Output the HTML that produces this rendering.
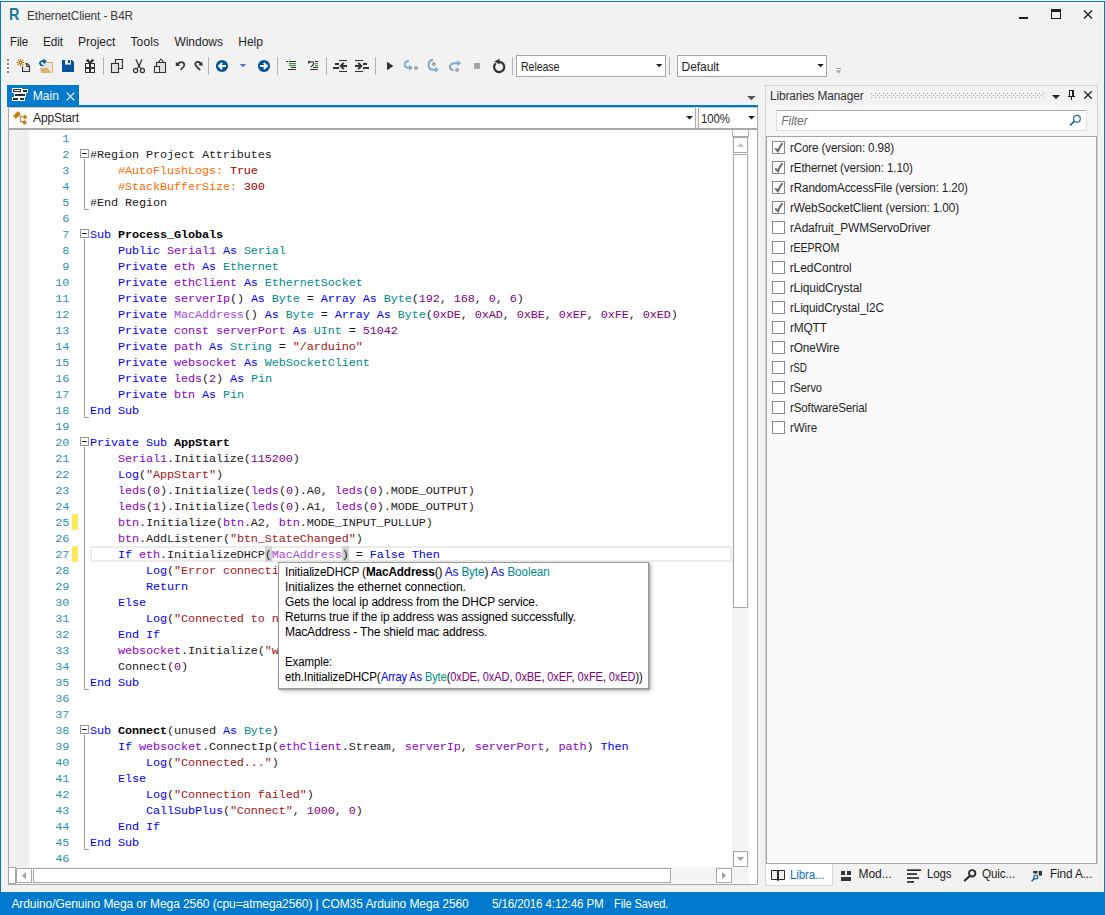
<!DOCTYPE html>
<html lang="en"><head><meta charset="utf-8"><title>EthernetClient - B4R</title>
<style>
html,body{margin:0;padding:0;background:#f2f2f2;}
body{width:1105px;height:915px;overflow:hidden;font-family:"Liberation Sans",sans-serif;font-size:12px;color:#1e1e1e;}
#win{position:relative;width:1105px;height:915px;overflow:hidden;background:#f2f2f2;}
.ab{position:absolute;box-sizing:border-box;}
.tx{position:absolute;white-space:pre;line-height:16px;height:16px;}
.mono{font-family:"Liberation Mono",monospace;}
.cl{position:absolute;left:90px;height:16px;line-height:16px;white-space:pre;font-family:"Liberation Mono",monospace;font-size:11.84px;letter-spacing:-0.1052px;margin-top:1px;color:#1a1a1a;}
.ln{position:absolute;left:30px;width:39.3px;text-align:right;height:16px;line-height:16px;font-family:"Liberation Mono",monospace;font-size:11.84px;letter-spacing:-0.1052px;margin-top:1px;color:#2b91af;}
.k{color:#0000ff;}
.t{color:#008b8b;}
.g{color:#8b00c8;}
.gh{color:#a446dc;}
.n{color:#800080;}
.s{color:#a31515;}
.b{font-weight:bold;color:#000;}
.a{color:#ff6a00;}
.r{color:#a00000;}
.w{color:#fff;}
.it{font-style:italic;}
.lib{color:#1e1e1e;}


</style></head>
<body>
<div id="win">
<div class="ab " style="left:0px;top:0px;width:1105px;height:1px;background:#ffffff"></div>
<div class="ab " style="left:0px;top:1px;width:1105px;height:1px;background:#007acc"></div>
<div class="ab " style="left:0px;top:1px;width:1px;height:914px;background:#007acc"></div>
<div class="ab " style="left:1104px;top:1px;width:1px;height:914px;background:#007acc"></div>
<div class="ab " style="left:1px;top:2px;width:1103px;height:1px;background:#fbf9f6"></div>
<div class="ab " style="left:1px;top:2px;width:1px;height:890px;background:#fbf9f6"></div>
<div class="ab " style="left:1103px;top:2px;width:1px;height:890px;background:#fbf9f6"></div>
<span id="t1" class="tx " style="left:9px;top:7.38px;font-size:17px;font-weight:bold;color:#1e7a96;letter-spacing:-0.12px;transform:scaleX(0.8470);transform-origin:0 0">R</span>
<span id="t2" class="tx " style="left:27px;top:7.63px;font-size:12px;color:#3c3c3c;letter-spacing:-0.12px;transform:scaleX(0.9846);transform-origin:0 0">EthernetClient - B4R</span>
<div class="ab " style="left:1019px;top:17px;width:9px;height:2px;background:#1e1e1e"></div>
<div class="ab " style="left:1051px;top:9px;width:10px;height:10px;border:1px solid #1e1e1e;border-top:3px solid #1e1e1e"></div>
<svg class="ab" style="left:1083px;top:10px" width="10" height="9" viewBox="0 0 10 9"><path d="M1 0.5 L9 8.5 M9 0.5 L1 8.5" stroke="#1e1e1e" stroke-width="1.3" fill="none"/></svg>
<span id="t3" class="tx " style="left:10px;top:34.23px;font-size:12px;letter-spacing:-0.12px;transform:scaleX(0.9542);transform-origin:0 0">File</span>
<span id="t4" class="tx " style="left:43px;top:34.23px;font-size:12px;letter-spacing:-0.12px;transform:scaleX(0.9798);transform-origin:0 0">Edit</span>
<span id="t5" class="tx " style="left:78px;top:34.23px;font-size:12px;letter-spacing:-0.008px">Project</span>
<span id="t6" class="tx " style="left:130.5px;top:34.23px;font-size:12px;letter-spacing:0.117px">Tools</span>
<span id="t7" class="tx " style="left:174.4px;top:34.23px;font-size:12px;letter-spacing:-0.012px">Windows</span>
<span id="t8" class="tx " style="left:238.2px;top:34.23px;font-size:12px;letter-spacing:0.028px">Help</span>
<div class="ab " style="left:7px;top:59px;width:2px;height:2px;background:#8a8a8a"></div>
<div class="ab " style="left:7px;top:63px;width:2px;height:2px;background:#8a8a8a"></div>
<div class="ab " style="left:7px;top:67px;width:2px;height:2px;background:#8a8a8a"></div>
<div class="ab " style="left:7px;top:71px;width:2px;height:2px;background:#8a8a8a"></div>
<div class="ab " style="left:103px;top:57px;width:1px;height:18px;background:#b4b4b4"></div>
<div class="ab " style="left:208px;top:57px;width:1px;height:18px;background:#b4b4b4"></div>
<div class="ab " style="left:277px;top:57px;width:1px;height:18px;background:#b4b4b4"></div>
<div class="ab " style="left:326px;top:57px;width:1px;height:18px;background:#b4b4b4"></div>
<div class="ab " style="left:375px;top:57px;width:1px;height:18px;background:#b4b4b4"></div>
<div class="ab " style="left:512px;top:57px;width:1px;height:18px;background:#b4b4b4"></div>
<div class="ab " style="left:669px;top:57px;width:1px;height:18px;background:#b4b4b4"></div>
<svg class="ab" style="left:0;top:54px" width="520" height="24" viewBox="0 54 520 24"><path d="M22.5 66.5 V71.5 H29.5 V66 L27 63.5 H25.5" fill="#e2e2e2" stroke="#333333" stroke-width="1.1"/><path d="M26.6 63.6 V66.4 H29.4" fill="none" stroke="#333333" stroke-width="1"/><g stroke="#c8780a" stroke-width="1.1" stroke-linecap="round"><path d="M20.5 59.3 V61.3 M20.5 63.7 V65.7 M17.2 62.5 H19.3 M21.7 62.5 H23.8"/></g><circle cx="20.5" cy="62.5" r="1.5" fill="none" stroke="#c8780a" stroke-width="1.1"/><circle cx="18.2" cy="60.2" r="0.75" fill="#c8780a"/><circle cx="22.8" cy="60.2" r="0.75" fill="#c8780a"/><circle cx="18.2" cy="64.8" r="0.75" fill="#c8780a"/><circle cx="22.8" cy="64.8" r="0.75" fill="#c8780a"/><path d="M43 62.5 H52.5 V73" fill="none" stroke="#deb46e" stroke-width="1.1"/><rect x="43" y="63" width="9" height="5.5" fill="#e4e4e4"/><path d="M40 68 H47.5 L51 72 V73 H41 V70 H40 Z" fill="#deb46e"/><path d="M41.5 65.5 C38 62.5 41 60.5 44.5 61.3" fill="none" stroke="#00539c" stroke-width="1.7"/><path d="M43.3 58.6 L46.8 61.2 L43.6 64.2 Z" fill="#00539c"/><path d="M41 65.2 L43.6 66" fill="none" stroke="#00539c" stroke-width="1.3"/><path d="M62 60 H72 L74 62 V72 H62 Z" fill="#00539c"/><rect x="65" y="60" width="6" height="4.6" fill="#eeeeee"/><rect x="68" y="60" width="2" height="3" fill="#00539c"/><rect x="85" y="63" width="10" height="10" fill="#333333"/><rect x="86" y="64" width="3" height="3" fill="#f4f4f4"/><rect x="91" y="64" width="3" height="3" fill="#f4f4f4"/><rect x="86" y="69" width="3" height="3" fill="#f4f4f4"/><rect x="91" y="69" width="3" height="3" fill="#f4f4f4"/><path d="M87.3 60 L90 63 M92.7 60 L90 63" fill="none" stroke="#333333" stroke-width="2.2"/><path d="M86.3 59.6 h2.2 v2 h-2.2z M91.5 59.6 h2.2 v2 h-2.2z" fill="#333333"/><path d="M115.5 63 V59.5 H122.5 V68.5 H119" fill="#e8e8e8" stroke="#333333" stroke-width="1.1"/><rect x="111.5" y="63.5" width="7" height="9" fill="#e2e2e2" stroke="#333333" stroke-width="1.1"/><path d="M135.3 59.2 L136.6 59.2 L139.6 66 L141.9 68.7 L141 69.3 L138.4 66.6 Z" fill="#333333"/><path d="M142.7 59.2 L141.4 59.2 L138.4 66 L136.1 68.7 L137 69.3 L139.6 66.6 Z" fill="#333333"/><circle cx="135.6" cy="70.5" r="2.1" fill="none" stroke="#333333" stroke-width="1.2"/><circle cx="142.4" cy="70.5" r="2.1" fill="none" stroke="#333333" stroke-width="1.2"/><path d="M156.5 66 V62.5 H165.5 V72.5 H160" fill="#e2e2e2" stroke="#333333" stroke-width="1.1"/><path d="M158.3 62.3 L161 59.2 L163.7 62.3" fill="none" stroke="#333333" stroke-width="1.2"/><circle cx="161" cy="61.2" r="0.9" fill="#f4f4f4"/><rect x="154.5" y="66.5" width="5" height="6" fill="#f4f4f4" stroke="#333333" stroke-width="1.1"/><path d="M178 64.6 C178.6 61.6 184.2 60.9 184.3 64.9 C184.3 67 182.2 68.2 180.5 69.6" fill="none" stroke="#333333" stroke-width="1.75"/><path d="M175.8 61.8 L175.8 66.1 L180.2 65.8 Z" fill="#333333"/><path d="M200.5 64.3 C200 61.3 195.3 60.8 195.3 64.3 C195.3 65.6 196.2 66.4 200.2 70" fill="none" stroke="#333333" stroke-width="1.75"/><path d="M202 61.5 L202.8 65.8 L198.6 65.3 Z" fill="#333333"/><circle cx="222" cy="66" r="6.1" fill="#00539c"/><path d="M226 66 H220 M222.2 62.8 L219 66 L222.2 69.2" fill="none" stroke="#fff" stroke-width="1.9"/><path d="M239.8 64 H246.2 L243 67.3 Z" fill="#4a74c0"/><circle cx="264" cy="66" r="6.1" fill="#00539c"/><path d="M260 66 H266 M263.8 62.8 L267 66 L263.8 69.2" fill="none" stroke="#fff" stroke-width="1.9"/><rect x="286" y="61" width="2" height="1" fill="#333333"/><rect x="289" y="61" width="7" height="1" fill="#333333"/><rect x="289" y="63" width="7" height="1.2" fill="#3a9a3a"/><rect x="289" y="65" width="7" height="1.2" fill="#3a9a3a"/><rect x="291" y="67" width="5" height="1" fill="#333333"/><rect x="288" y="69" width="8" height="1" fill="#333333"/><rect x="315" y="61" width="3" height="1" fill="#333333"/><rect x="315" y="63" width="3" height="1.2" fill="#3a9a3a"/><rect x="315" y="65" width="3" height="1.2" fill="#3a9a3a"/><rect x="313" y="67" width="5" height="1" fill="#333333"/><rect x="310" y="69" width="8" height="1" fill="#333333"/><path d="M310.5 62.3 C312.5 61.2 314 62.3 313.6 64 C313.3 65.3 311.8 66 310.8 67.2" fill="none" stroke="#333333" stroke-width="1.2"/><path d="M307.9 60.8 L311 61.3 L308.5 64.2 Z" fill="#333333"/><rect x="339" y="61" width="8" height="10" fill="#e8e8e8"/><rect x="355" y="61" width="8" height="10" fill="#e8e8e8"/><rect x="339" y="60" width="8" height="1" fill="#333333"/><rect x="339" y="71" width="8" height="1" fill="#333333"/><rect x="335" y="63" width="4" height="2" fill="#333333"/><rect x="333" y="67" width="6" height="2" fill="#333333"/><path d="M347 66 H342 M343.8 62.8 L340.6 66 L343.8 69.2" fill="none" stroke="#333333" stroke-width="1.9"/><rect x="355" y="60" width="8" height="1" fill="#333333"/><rect x="355" y="71" width="8" height="1" fill="#333333"/><rect x="363" y="63" width="4" height="2" fill="#333333"/><rect x="363" y="67" width="6" height="2" fill="#333333"/><path d="M355 66 H360 M358.2 62.8 L361.4 66 L358.2 69.2" fill="none" stroke="#333333" stroke-width="1.9"/><path d="M387 61.8 L393.4 66 L387 70.2 Z" fill="#333333"/><path d="M409 60.8 C403.5 61.5 403 67.5 408.5 67.8 H410" fill="none" stroke="#82abd3" stroke-width="2"/><path d="M409 64.8 L412.9 67.8 L409 70.8 Z" fill="#82abd3"/><circle cx="416" cy="67.9" r="2" fill="#a6a6a6"/><path d="M433 59.8 C427.5 60.5 427 69 432.5 69.8 H436" fill="none" stroke="#82abd3" stroke-width="2"/><path d="M435 66.8 L438.9 69.8 L435 72.8 Z" fill="#82abd3"/><circle cx="433.9" cy="63.9" r="2" fill="#a6a6a6"/><path d="M458 63.2 H455 C449 63 448 69.5 453.5 70.3" fill="none" stroke="#82abd3" stroke-width="2"/><path d="M457.2 60.2 L461.1 63.2 L457.2 66.2 Z" fill="#82abd3"/><circle cx="457" cy="70" r="2" fill="#a6a6a6"/><rect x="474" y="63" width="6" height="6" fill="#a6a6a6"/><path d="M495.8 63.2 A5.1 5.1 0 1 0 499.5 61.9" fill="none" stroke="#333333" stroke-width="2.2"/><path d="M494.3 61.6 L499.6 58.8 L499.9 64.6 Z" fill="#333333"/></svg>
<div class="ab " style="left:516px;top:55px;width:150px;height:22px;background:#fff;border:1px solid #a6a6a6"></div>
<span id="t9" class="tx " style="left:520.6px;top:58.63px;font-size:12px;letter-spacing:-0.12px;transform:scaleX(0.8891);transform-origin:0 0">Release</span>
<svg class="ab" style="left:656px;top:64px" width="7" height="4" viewBox="0 0 7 4"><path d="M0 0 h6.4 l-3.2 3.2 z" fill="#1e1e1e"/></svg>
<div class="ab " style="left:677px;top:55px;width:150px;height:22px;background:#fff;border:1px solid #a6a6a6"></div>
<span id="t10" class="tx " style="left:681.6px;top:58.63px;font-size:12px;letter-spacing:-0.076px">Default</span>
<svg class="ab" style="left:817px;top:64px" width="7" height="4" viewBox="0 0 7 4"><path d="M0.4 0 h6.4 l-3.2 3.2 z" fill="#1e1e1e"/></svg>
<svg class="ab" style="left:836px;top:68px" width="5" height="6" viewBox="0 0 5 6"><rect x="0" y="0" width="5" height="1" fill="#a0a0a0"/><path d="M0 2.3 h5 l-2.5 3.2 z" fill="#a0a0a0"/></svg>
<div class="ab " style="left:7px;top:85px;width:72px;height:22px;background:#007acc"></div>
<div class="ab " style="left:7px;top:105px;width:751px;height:2px;background:#007acc"></div>
<svg class="ab" style="left:12px;top:88px" width="16" height="13" viewBox="12 88 16 13"><g fill="#fff"><rect x="12" y="88" width="10" height="5"/><rect x="22" y="89" width="6" height="4"/><rect x="14" y="93" width="12" height="4"/><rect x="12" y="97" width="13" height="4"/></g><g fill="#2d2d2d"><rect x="13" y="89" width="8" height="3"/><rect x="23" y="90" width="4" height="2"/><rect x="15" y="94" width="10" height="2"/><rect x="13" y="98" width="5" height="2"/><rect x="20" y="98" width="4" height="2"/></g><rect x="14" y="90" width="6" height="1" fill="#fff"/></svg>
<span id="t11" class="tx w" style="left:32.7px;top:88.03px;font-size:12px;letter-spacing:0.071px">Main</span>
<svg class="ab" style="left:66px;top:92px" width="9" height="9" viewBox="0 0 9 9"><path d="M0.7 0.7 L8.3 8.3 M8.3 0.7 L0.7 8.3" stroke="#fff" stroke-width="1.2" fill="none"/></svg>
<svg class="ab" style="left:747px;top:96px" width="9" height="5" viewBox="0 0 9 5"><path d="M0 0 L8.6 0 L4.3 4.2 Z" fill="#555"/></svg>
<div class="ab " style="left:8px;top:107px;width:688px;height:22px;background:#ffffff;border-left:1px solid #aaa;border-right:1px solid #aaa;border-top:1px solid #c4c4c4"></div>
<div class="ab " style="left:698px;top:107px;width:60px;height:22px;background:#ffffff;border-left:1px solid #aaa;border-right:1px solid #aaa;border-top:1px solid #c4c4c4"></div>
<svg class="ab" style="left:12px;top:110px" width="17" height="16" viewBox="12 110 17 16"><g fill="#c8801a"><path d="M13 116 L18 111 L20.9 113.9 L15.9 118.9 Z"/><path d="M25 114.6 L27.4 117 L25 119.4 L22.6 117 Z"/><path d="M24.4 119.9 L27 122.5 L24.4 125.1 L21.8 122.5 Z"/><path d="M19 115.8 H23.5 V116.8 H20.9 V121 H23 V122 H19.9 V116.8 H19 Z"/></g></svg>
<span id="t12" class="tx " style="left:33px;top:110.03px;font-size:12px;letter-spacing:-0.088px">AppStart</span>
<svg class="ab" style="left:686px;top:116px" width="7" height="4" viewBox="0 0 7 4"><path d="M0 0 L7 0 L3.5 3.5 Z" fill="#1e1e1e"/></svg>
<span id="t13" class="tx " style="left:701.3px;top:111.03px;font-size:12px;letter-spacing:-0.12px;transform:scaleX(0.9496);transform-origin:0 0">100%</span>
<svg class="ab" style="left:748px;top:116px" width="7" height="4" viewBox="0 0 7 4"><path d="M0 0 L7 0 L3.5 3.5 Z" fill="#1e1e1e"/></svg>
<div class="ab " style="left:8px;top:129px;width:750px;height:756px;background:#ffffff;border:1px solid #a8a8a8;border-top:none"></div>
<div class="ab " style="left:9px;top:130px;width:20px;height:737px;background:#f0f0f0"></div>
<div class="ab " style="left:8px;top:128px;width:750px;height:2px;background:#a8a8a8"></div>
<div class="ab " style="left:90px;top:546px;width:642px;height:16px;border:2px solid #ececec"></div>
<div class="ab " style="left:265px;top:546px;width:7px;height:16px;background:#d2d2d2"></div>
<div class="ab " style="left:342px;top:546px;width:7px;height:16px;background:#d2d2d2"></div>
<div class="ab " style="left:72px;top:514px;width:6px;height:16px;background:#ffeb5a"></div>
<div class="ab " style="left:72px;top:546px;width:6px;height:16px;background:#ffeb5a"></div>
<div class="ln" style="top:130px">1</div>
<div class="ln" style="top:146px">2</div>
<div class="cl" style="top:146px">#Region Project Attributes</div>
<div class="ln" style="top:162px">3</div>
<div class="cl" style="top:162px">    <span class="a">#AutoFlushLogs:</span><span class="r"> True</span></div>
<div class="ln" style="top:178px">4</div>
<div class="cl" style="top:178px">    <span class="a">#StackBufferSize:</span><span class="r"> 300</span></div>
<div class="ln" style="top:194px">5</div>
<div class="cl" style="top:194px">#End Region</div>
<div class="ln" style="top:210px">6</div>
<div class="ln" style="top:226px">7</div>
<div class="cl" style="top:226px"><span class="k">Sub </span><span class="b">Process_Globals</span></div>
<div class="ln" style="top:242px">8</div>
<div class="cl" style="top:242px">    <span class="k">Public </span><span class="g">Serial1 </span><span class="k">As </span><span class="t">Serial</span></div>
<div class="ln" style="top:258px">9</div>
<div class="cl" style="top:258px">    <span class="k">Private </span><span class="g">eth </span><span class="k">As </span><span class="t">Ethernet</span></div>
<div class="ln" style="top:274px">10</div>
<div class="cl" style="top:274px">    <span class="k">Private </span><span class="g">ethClient </span><span class="k">As </span><span class="t">EthernetSocket</span></div>
<div class="ln" style="top:290px">11</div>
<div class="cl" style="top:290px">    <span class="k">Private </span><span class="g">serverIp</span>() <span class="k">As </span><span class="t">Byte</span> = <span class="k">Array As </span><span class="t">Byte</span>(<span class="n">192</span>, <span class="n">168</span>, <span class="n">0</span>, <span class="n">6</span>)</div>
<div class="ln" style="top:306px">12</div>
<div class="cl" style="top:306px">    <span class="k">Private </span><span class="gh">MacAddress</span>() <span class="k">As </span><span class="t">Byte</span> = <span class="k">Array As </span><span class="t">Byte</span>(<span class="n">0xDE</span>, <span class="n">0xAD</span>, <span class="n">0xBE</span>, <span class="n">0xEF</span>, <span class="n">0xFE</span>, <span class="n">0xED</span>)</div>
<div class="ln" style="top:322px">13</div>
<div class="cl" style="top:322px">    <span class="k">Private </span><span class="g">const serverPort </span><span class="k">As </span><span class="t">UInt</span> = <span class="n">51042</span></div>
<div class="ln" style="top:338px">14</div>
<div class="cl" style="top:338px">    <span class="k">Private </span><span class="g">path </span><span class="k">As </span><span class="t">String</span> = <span class="s">"/arduino"</span></div>
<div class="ln" style="top:354px">15</div>
<div class="cl" style="top:354px">    <span class="k">Private </span><span class="g">websocket </span><span class="k">As </span><span class="t">WebSocketClient</span></div>
<div class="ln" style="top:370px">16</div>
<div class="cl" style="top:370px">    <span class="k">Private </span><span class="g">leds</span>(<span class="n">2</span>) <span class="k">As </span><span class="t">Pin</span></div>
<div class="ln" style="top:386px">17</div>
<div class="cl" style="top:386px">    <span class="k">Private </span><span class="g">btn </span><span class="k">As </span><span class="t">Pin</span></div>
<div class="ln" style="top:402px">18</div>
<div class="cl" style="top:402px"><span class="k">End Sub</span></div>
<div class="ln" style="top:418px">19</div>
<div class="ln" style="top:434px">20</div>
<div class="cl" style="top:434px"><span class="k">Private Sub </span><span class="b">AppStart</span></div>
<div class="ln" style="top:450px">21</div>
<div class="cl" style="top:450px">    <span class="g">Serial1</span>.Initialize(<span class="n">115200</span>)</div>
<div class="ln" style="top:466px">22</div>
<div class="cl" style="top:466px">    <span class="k">Log</span>(<span class="s">"AppStart"</span>)</div>
<div class="ln" style="top:482px">23</div>
<div class="cl" style="top:482px">    <span class="g">leds</span>(<span class="n">0</span>).Initialize(<span class="g">leds</span>(<span class="n">0</span>).A0, <span class="g">leds</span>(<span class="n">0</span>).MODE_OUTPUT)</div>
<div class="ln" style="top:498px">24</div>
<div class="cl" style="top:498px">    <span class="g">leds</span>(<span class="n">1</span>).Initialize(<span class="g">leds</span>(<span class="n">0</span>).A1, <span class="g">leds</span>(<span class="n">0</span>).MODE_OUTPUT)</div>
<div class="ln" style="top:514px">25</div>
<div class="cl" style="top:514px">    <span class="g">btn</span>.Initialize(<span class="g">btn</span>.A2, <span class="g">btn</span>.MODE_INPUT_PULLUP)</div>
<div class="ln" style="top:530px">26</div>
<div class="cl" style="top:530px">    <span class="g">btn</span>.AddListener(<span class="s">"btn_StateChanged"</span>)</div>
<div class="ln" style="top:546px">27</div>
<div class="cl" style="top:546px">    <span class="k">If </span><span class="g">eth</span>.InitializeDHCP(<span class="gh">MacAddress</span>) = <span class="k">False Then</span></div>
<div class="ln" style="top:562px">28</div>
<div class="cl" style="top:562px">        <span class="k">Log</span>(<span class="s">"Error connecti</span></div>
<div class="ln" style="top:578px">29</div>
<div class="cl" style="top:578px">        <span class="k">Return</span></div>
<div class="ln" style="top:594px">30</div>
<div class="cl" style="top:594px">    <span class="k">Else</span></div>
<div class="ln" style="top:610px">31</div>
<div class="cl" style="top:610px">        <span class="k">Log</span>(<span class="s">"Connected to n</span></div>
<div class="ln" style="top:626px">32</div>
<div class="cl" style="top:626px">    <span class="k">End If</span></div>
<div class="ln" style="top:642px">33</div>
<div class="cl" style="top:642px">    <span class="g">websocket</span>.Initialize(<span class="s">"w</span></div>
<div class="ln" style="top:658px">34</div>
<div class="cl" style="top:658px">    Connect(<span class="n">0</span>)</div>
<div class="ln" style="top:674px">35</div>
<div class="cl" style="top:674px"><span class="k">End Sub</span></div>
<div class="ln" style="top:690px">36</div>
<div class="ln" style="top:706px">37</div>
<div class="ln" style="top:722px">38</div>
<div class="cl" style="top:722px"><span class="k">Sub </span><span class="b">Connect</span>(unused <span class="k">As </span><span class="t">Byte</span>)</div>
<div class="ln" style="top:738px">39</div>
<div class="cl" style="top:738px">    <span class="k">If </span><span class="g">websocket</span>.ConnectIp(<span class="g">ethClient</span>.Stream, <span class="g">serverIp</span>, <span class="g">serverPort</span>, <span class="g">path</span>) <span class="k">Then</span></div>
<div class="ln" style="top:754px">40</div>
<div class="cl" style="top:754px">        <span class="k">Log</span>(<span class="s">"Connected..."</span>)</div>
<div class="ln" style="top:770px">41</div>
<div class="cl" style="top:770px">    <span class="k">Else</span></div>
<div class="ln" style="top:786px">42</div>
<div class="cl" style="top:786px">        <span class="k">Log</span>(<span class="s">"Connection failed"</span>)</div>
<div class="ln" style="top:802px">43</div>
<div class="cl" style="top:802px">        <span class="k">CallSubPlus</span>(<span class="s">"Connect"</span>, <span class="n">1000</span>, <span class="n">0</span>)</div>
<div class="ln" style="top:818px">44</div>
<div class="cl" style="top:818px">    <span class="k">End If</span></div>
<div class="ln" style="top:834px">45</div>
<div class="cl" style="top:834px"><span class="k">End Sub</span></div>
<div class="ln" style="top:850px">46</div>
<div class="ab " style="left:80px;top:149px;width:9px;height:9px;background:#fff;border:1px solid #999"></div>
<div class="ab " style="left:82px;top:153px;width:5px;height:1px;background:#333"></div>
<div class="ab " style="left:84px;top:159px;width:1px;height:50px;background:#999"></div>
<div class="ab " style="left:84px;top:209px;width:5px;height:1px;background:#999"></div>
<div class="ab " style="left:80px;top:229px;width:9px;height:9px;background:#fff;border:1px solid #999"></div>
<div class="ab " style="left:82px;top:233px;width:5px;height:1px;background:#333"></div>
<div class="ab " style="left:84px;top:239px;width:1px;height:178px;background:#999"></div>
<div class="ab " style="left:84px;top:417px;width:5px;height:1px;background:#999"></div>
<div class="ab " style="left:80px;top:437px;width:9px;height:9px;background:#fff;border:1px solid #999"></div>
<div class="ab " style="left:82px;top:441px;width:5px;height:1px;background:#333"></div>
<div class="ab " style="left:84px;top:447px;width:1px;height:242px;background:#999"></div>
<div class="ab " style="left:84px;top:689px;width:5px;height:1px;background:#999"></div>
<div class="ab " style="left:80px;top:725px;width:9px;height:9px;background:#fff;border:1px solid #999"></div>
<div class="ab " style="left:82px;top:729px;width:5px;height:1px;background:#333"></div>
<div class="ab " style="left:84px;top:735px;width:1px;height:114px;background:#999"></div>
<div class="ab " style="left:84px;top:849px;width:5px;height:1px;background:#999"></div>
<div class="ab " style="left:732px;top:130px;width:17px;height:737px;background:#f4f4f4"></div>
<div class="ab " style="left:732px;top:130px;width:17px;height:7px;background:#fff;border:1px solid #a8a8a8;border-top:none"></div>
<div class="ab " style="left:733px;top:137px;width:15px;height:16px;background:#fff;border:1px solid #a8a8a8"></div>
<svg class="ab" style="left:737px;top:143px" width="7" height="4" viewBox="0 0 7 4"><path d="M0 4 h7 l-3.5 -4 z" fill="#c0c0c0"/></svg>
<div class="ab " style="left:733px;top:154px;width:15px;height:454px;background:#fff;border:1px solid #a8a8a8"></div>
<div class="ab " style="left:733px;top:851px;width:15px;height:16px;background:#fff;border:1px solid #a8a8a8"></div>
<svg class="ab" style="left:737px;top:857px" width="7" height="4" viewBox="0 0 7 4"><path d="M0 0 h7 l-3.5 4 z" fill="#a0a0a0"/></svg>
<div class="ab " style="left:9px;top:867px;width:740px;height:17px;background:#f4f4f4"></div>
<div class="ab " style="left:9px;top:867px;width:7px;height:17px;background:#fff;border:1px solid #a8a8a8;border-left:none"></div>
<div class="ab " style="left:16px;top:868px;width:16px;height:15px;background:#fff;border:1px solid #a8a8a8"></div>
<svg class="ab" style="left:22px;top:872px" width="4" height="7" viewBox="0 0 4 7"><path d="M4 0 v7 l-4 -3.5 z" fill="#a0a0a0"/></svg>
<div class="ab " style="left:33px;top:868px;width:638px;height:15px;background:#fff;border:1px solid #a8a8a8"></div>
<div class="ab " style="left:716px;top:868px;width:16px;height:15px;background:#fff;border:1px solid #a8a8a8"></div>
<svg class="ab" style="left:722px;top:872px" width="4" height="7" viewBox="0 0 4 7"><path d="M0 0 v7 l4 -3.5 z" fill="#a0a0a0"/></svg>
<div class="ab " style="left:732px;top:867px;width:17px;height:17px;background:#f4f4f4"></div>
<div class="ab " style="left:278px;top:562px;width:371px;height:127px;background:#fff;border:1px solid #9a9a9a;box-shadow:1px 1px 0 #a8a8a8,2px 2px 4px rgba(0,0,0,0.28)"></div>
<span id="t14" class="tx " style="left:284.9px;top:564.23px;font-size:12px;color:#000;letter-spacing:-0.12px;transform:scaleX(0.9797);transform-origin:0 0">InitializeDHCP (<b>MacAddress</b>() <span style="color:#0000ff">As </span><span style="color:#008b8b">Byte</span>) <span style="color:#0000ff">As </span><span style="color:#008b8b">Boolean</span></span>
<span id="t15" class="tx " style="left:284.9px;top:579.23px;font-size:12px;color:#000;letter-spacing:-0.013px">Initializes the ethernet connection.</span>
<span id="t16" class="tx " style="left:284.9px;top:594.23px;font-size:12px;color:#000;letter-spacing:-0.12px;transform:scaleX(0.9904);transform-origin:0 0">Gets the local ip address from the DHCP service.</span>
<span id="t17" class="tx " style="left:284.9px;top:609.23px;font-size:12px;color:#000;letter-spacing:-0.12px;transform:scaleX(0.9906);transform-origin:0 0">Returns true if the ip address was assigned successfully.</span>
<span id="t18" class="tx " style="left:284.9px;top:624.23px;font-size:12px;color:#000;letter-spacing:-0.155px">MacAddress - The shield mac address.</span>
<span id="t19" class="tx " style="left:284.9px;top:654.23px;font-size:12px;color:#000;letter-spacing:-0.12px;transform:scaleX(0.9578);transform-origin:0 0">Example:</span>
<span id="t20" class="tx " style="left:284.9px;top:669.23px;font-size:12px;color:#000;letter-spacing:-0.12px;transform:scaleX(0.9647);transform-origin:0 0">eth.InitializeDHCP(</span>
<span id="t21" class="tx " style="left:380.5px;top:669.23px;font-size:12px;color:#000;letter-spacing:-0.12px;transform:scaleX(0.9224);transform-origin:0 0"><span style="color:#0000ff">Array As </span><span style="color:#008b8b">Byte</span>(<span style="color:#800080">0xDE</span>, <span style="color:#800080">0xAD</span>, <span style="color:#800080">0xBE</span>, <span style="color:#800080">0xEF</span>, <span style="color:#800080">0xFE</span>, <span style="color:#800080">0xED</span>))</span>
<div class="ab " style="left:765px;top:85px;width:333px;height:779px;background:#f7f7f7;border:1px solid #d2d2d2"></div>
<div class="ab " style="left:766px;top:86px;width:331px;height:19px;background:#f2f2f2"></div>
<span id="t22" class="tx " style="left:770.2px;top:88.03px;font-size:12px;color:#333;letter-spacing:-0.12px;transform:scaleX(0.9886);transform-origin:0 0">Libraries Manager</span>
<svg class="ab" style="left:871px;top:93px" width="173" height="5" viewBox="0 0 173 5"><defs><pattern id="gp" width="4" height="4" patternUnits="userSpaceOnUse"><rect x="0" y="0" width="1" height="1" fill="#999"/><rect x="2" y="2" width="1" height="1" fill="#999"/></pattern></defs><rect width="173" height="5" fill="url(#gp)"/></svg>
<svg class="ab" style="left:1052px;top:95px" width="8" height="4" viewBox="0 0 8 4"><path d="M0 0 h8 l-4 4 z" fill="#1e1e1e"/></svg>
<svg class="ab" style="left:1068px;top:90px" width="8" height="10" viewBox="1068 90 8 10"><g fill="#1e1e1e"><rect x="1069" y="90" width="5" height="1"/><rect x="1069" y="90" width="1" height="6"/><rect x="1072" y="90" width="2" height="6"/><rect x="1068" y="96" width="7" height="1"/><rect x="1071" y="97" width="1" height="3"/></g></svg>
<svg class="ab" style="left:1084px;top:91px" width="8" height="8" viewBox="0 0 8 8"><path d="M0.3 0.3 L7.7 7.7 M7.7 0.3 L0.3 7.7" stroke="#1e1e1e" stroke-width="1.25" fill="none"/></svg>
<div class="ab " style="left:776px;top:110px;width:311px;height:21px;background:#fff;border:1px solid #dcdfe6;border-top-color:#abadb3"></div>
<span id="t23" class="tx it" style="left:781.2px;top:112.93px;font-size:12px;color:#6a6a6a;letter-spacing:-0.029px">Filter</span>
<svg class="ab" style="left:1069px;top:114px" width="13" height="13" viewBox="1069 114 13 13"><circle cx="1076.9" cy="118.7" r="3.4" fill="none" stroke="#2a6ebb" stroke-width="1.3"/><path d="M1074.3 121.3 L1070.2 125.4" stroke="#1f559c" stroke-width="1.6"/></svg>
<div class="ab " style="left:766px;top:136px;width:331px;height:728px;background:#fafafa;border:1px solid #a6a6a6"></div>
<div class="ab " style="left:772px;top:141px;width:13px;height:13px;background:#fff;border:1px solid #8a8a8a"></div>
<svg class="ab" style="left:774px;top:142px" width="10" height="11" viewBox="0 0 10 11"><path d="M1.3 6.3 L4 9.3 C5.3 5.5 6.6 3.3 8.6 1.2" fill="none" stroke="#626262" stroke-width="1.9"/></svg>
<span id="t24" class="tx " style="left:789.7px;top:139.83px;font-size:12px;letter-spacing:-0.12px;transform:scaleX(0.9672);transform-origin:0 0">rCore (version: 0.98)</span>
<div class="ab " style="left:772px;top:161px;width:13px;height:13px;background:#fff;border:1px solid #8a8a8a"></div>
<svg class="ab" style="left:774px;top:162px" width="10" height="11" viewBox="0 0 10 11"><path d="M1.3 6.3 L4 9.3 C5.3 5.5 6.6 3.3 8.6 1.2" fill="none" stroke="#626262" stroke-width="1.9"/></svg>
<span id="t25" class="tx " style="left:789.7px;top:159.83px;font-size:12px;letter-spacing:-0.12px;transform:scaleX(0.9723);transform-origin:0 0">rEthernet (version: 1.10)</span>
<div class="ab " style="left:772px;top:181px;width:13px;height:13px;background:#fff;border:1px solid #8a8a8a"></div>
<svg class="ab" style="left:774px;top:182px" width="10" height="11" viewBox="0 0 10 11"><path d="M1.3 6.3 L4 9.3 C5.3 5.5 6.6 3.3 8.6 1.2" fill="none" stroke="#626262" stroke-width="1.9"/></svg>
<span id="t26" class="tx " style="left:789.7px;top:179.83px;font-size:12px;letter-spacing:-0.12px;transform:scaleX(0.9692);transform-origin:0 0">rRandomAccessFile (version: 1.20)</span>
<div class="ab " style="left:772px;top:201px;width:13px;height:13px;background:#fff;border:1px solid #8a8a8a"></div>
<svg class="ab" style="left:774px;top:202px" width="10" height="11" viewBox="0 0 10 11"><path d="M1.3 6.3 L4 9.3 C5.3 5.5 6.6 3.3 8.6 1.2" fill="none" stroke="#626262" stroke-width="1.9"/></svg>
<span id="t27" class="tx " style="left:789.7px;top:199.83px;font-size:12px;letter-spacing:-0.12px;transform:scaleX(0.9824);transform-origin:0 0">rWebSocketClient (version: 1.00)</span>
<div class="ab " style="left:772px;top:221px;width:13px;height:13px;background:#fff;border:1px solid #8a8a8a"></div>
<span id="t28" class="tx " style="left:789.7px;top:219.83px;font-size:12px;letter-spacing:-0.12px;transform:scaleX(0.9893);transform-origin:0 0">rAdafruit_PWMServoDriver</span>
<div class="ab " style="left:772px;top:241px;width:13px;height:13px;background:#fff;border:1px solid #8a8a8a"></div>
<span id="t29" class="tx " style="left:789.7px;top:239.83px;font-size:12px;letter-spacing:-0.12px;transform:scaleX(0.8935);transform-origin:0 0">rEEPROM</span>
<div class="ab " style="left:772px;top:261px;width:13px;height:13px;background:#fff;border:1px solid #8a8a8a"></div>
<span id="t30" class="tx " style="left:789.7px;top:259.83px;font-size:12px;letter-spacing:-0.064px">rLedControl</span>
<div class="ab " style="left:772px;top:281px;width:13px;height:13px;background:#fff;border:1px solid #8a8a8a"></div>
<span id="t31" class="tx " style="left:789.7px;top:279.83px;font-size:12px;letter-spacing:-0.090px">rLiquidCrystal</span>
<div class="ab " style="left:772px;top:301px;width:13px;height:13px;background:#fff;border:1px solid #8a8a8a"></div>
<span id="t32" class="tx " style="left:789.7px;top:299.83px;font-size:12px;letter-spacing:-0.12px;transform:scaleX(0.9714);transform-origin:0 0">rLiquidCrystal_I2C</span>
<div class="ab " style="left:772px;top:321px;width:13px;height:13px;background:#fff;border:1px solid #8a8a8a"></div>
<span id="t33" class="tx " style="left:789.7px;top:319.83px;font-size:12px;letter-spacing:-0.12px;transform:scaleX(0.9840);transform-origin:0 0">rMQTT</span>
<div class="ab " style="left:772px;top:341px;width:13px;height:13px;background:#fff;border:1px solid #8a8a8a"></div>
<span id="t34" class="tx " style="left:789.7px;top:339.83px;font-size:12px;letter-spacing:-0.12px;transform:scaleX(0.9785);transform-origin:0 0">rOneWire</span>
<div class="ab " style="left:772px;top:361px;width:13px;height:13px;background:#fff;border:1px solid #8a8a8a"></div>
<span id="t35" class="tx " style="left:789.7px;top:359.83px;font-size:12px;letter-spacing:-0.12px;transform:scaleX(0.8271);transform-origin:0 0">rSD</span>
<div class="ab " style="left:772px;top:381px;width:13px;height:13px;background:#fff;border:1px solid #8a8a8a"></div>
<span id="t36" class="tx " style="left:789.7px;top:379.83px;font-size:12px;letter-spacing:-0.12px;transform:scaleX(0.9213);transform-origin:0 0">rServo</span>
<div class="ab " style="left:772px;top:401px;width:13px;height:13px;background:#fff;border:1px solid #8a8a8a"></div>
<span id="t37" class="tx " style="left:789.7px;top:399.83px;font-size:12px;letter-spacing:-0.12px;transform:scaleX(0.9597);transform-origin:0 0">rSoftwareSerial</span>
<div class="ab " style="left:772px;top:421px;width:13px;height:13px;background:#fff;border:1px solid #8a8a8a"></div>
<span id="t38" class="tx " style="left:789.7px;top:419.83px;font-size:12px;letter-spacing:-0.12px;transform:scaleX(0.9618);transform-origin:0 0">rWire</span>
<div class="ab " style="left:765px;top:864px;width:68px;height:22px;background:#fff;border:1px solid #d6d6d6;border-top:none"></div>
<svg class="ab" style="left:771px;top:870px" width="14" height="11" viewBox="0 0 14 11"><path d="M0.5 0.5 H13.5 V9.5 H8 L7 10.5 L6 9.5 H0.5 Z" fill="#f0f0f5" stroke="#2a2a2a" stroke-width="1"/><rect x="6" y="0.5" width="2" height="10" fill="#2a2a2a"/></svg>
<span id="t39" class="tx " style="left:790.3px;top:866.83px;font-size:12px;color:#0e70c0;letter-spacing:-0.12px;transform:scaleX(0.9628);transform-origin:0 0">Libra...</span>
<svg class="ab" style="left:841px;top:871px" width="10" height="10" viewBox="0 0 10 10"><g fill="#333"><rect x="0" y="0" width="4" height="4"/><rect x="6" y="0" width="4" height="4"/><rect x="0" y="6" width="10" height="4"/></g></svg>
<span id="t40" class="tx " style="left:858.4px;top:866.13px;font-size:12px;letter-spacing:0.007px">Mod...</span>
<svg class="ab" style="left:907px;top:869px" width="14" height="14" viewBox="0 0 14 14"><g fill="#2a2a2a"><rect x="0" y="0.3" width="14" height="1.7"/><rect x="0" y="4.2" width="10" height="1.7"/><rect x="0" y="8.2" width="12" height="1.7"/><rect x="0" y="12.1" width="7" height="1.7"/></g></svg>
<span id="t41" class="tx " style="left:926.5px;top:866.13px;font-size:12px;letter-spacing:-0.12px;transform:scaleX(0.9589);transform-origin:0 0">Logs</span>
<svg class="ab" style="left:963px;top:868px" width="14" height="14" viewBox="963 868 14 14"><circle cx="972.2" cy="873.3" r="3.2" fill="none" stroke="#2a2a2a" stroke-width="1.9"/><path d="M969.8 876 L964.2 881" stroke="#2a2a2a" stroke-width="2.3"/></svg>
<span id="t42" class="tx " style="left:981.7px;top:866.13px;font-size:12px;letter-spacing:-0.12px;transform:scaleX(0.9691);transform-origin:0 0">Quic...</span>
<svg class="ab" style="left:1031px;top:870px" width="12" height="12" viewBox="1031 870 12 12"><g fill="#2a2a2a"><rect x="1033.3" y="871" width="4.2" height="2.4"/><rect x="1038.8" y="871" width="3.1" height="4.6"/></g><circle cx="1035.8" cy="876.9" r="1.9" fill="none" stroke="#1f559c" stroke-width="1.2"/><path d="M1034.4 878.4 L1031.6 881.2" stroke="#1f559c" stroke-width="1.4"/></svg>
<span id="t43" class="tx " style="left:1049.5px;top:866.13px;font-size:12px;letter-spacing:-0.12px;transform:scaleX(0.9802);transform-origin:0 0">Find A...</span>
<div class="ab " style="left:0px;top:892px;width:1105px;height:23px;background:#007acc"></div>
<span id="t44" class="tx w" style="left:11.4px;top:895.93px;font-size:12px;letter-spacing:-0.085px">Arduino/Genuino Mega or Mega 2560 (cpu=atmega2560) | COM35 Arduino Mega 2560</span>
<span id="t45" class="tx w" style="left:492.2px;top:895.93px;font-size:12px;letter-spacing:-0.12px;transform:scaleX(0.9638);transform-origin:0 0">5/16/2016 4:12:46 PM</span>
<span id="t46" class="tx w" style="left:613.5px;top:895.93px;font-size:12px;letter-spacing:-0.12px;transform:scaleX(0.9249);transform-origin:0 0">File Saved.</span>
</div>
</body></html>
